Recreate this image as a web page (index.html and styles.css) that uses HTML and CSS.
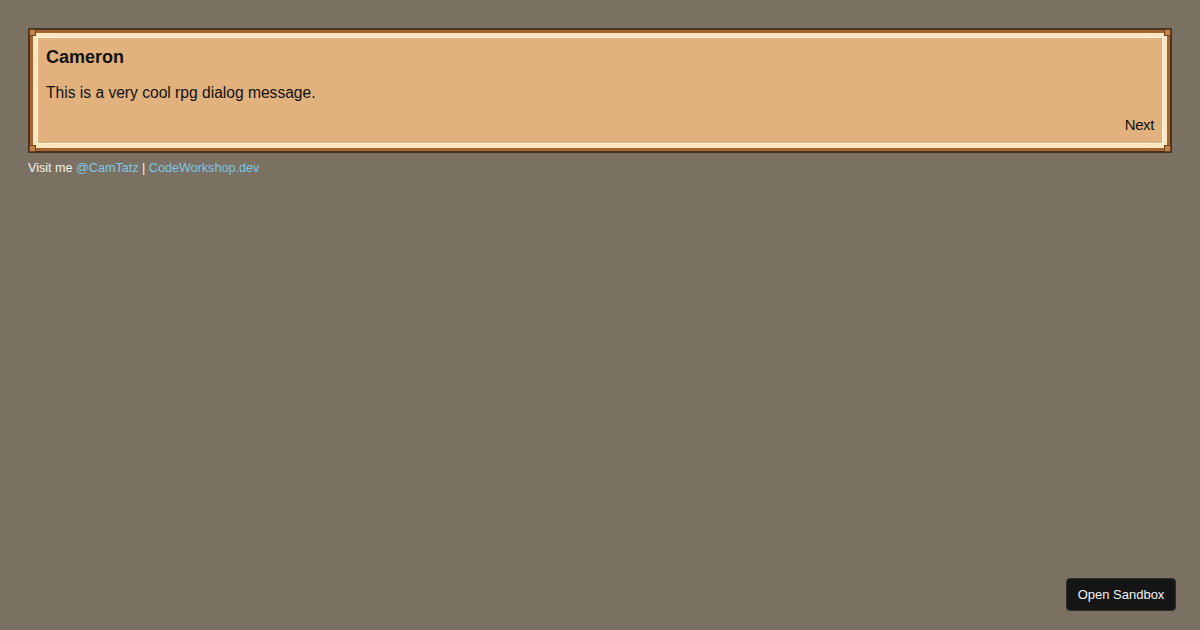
FILE: index.html
```html
<!DOCTYPE html>
<html lang="en">
<head>
<meta charset="utf-8">
<title>RPG Dialog</title>
<link rel="stylesheet" href="styles.css">
</head>
<body>
<main class="page">
  <section class="dialog">
    <span class="corner corner-tl"></span>
    <span class="corner corner-tr"></span>
    <span class="corner corner-bl"></span>
    <span class="corner corner-br"></span>
    <div class="dialog-inner">
      <div class="speaker">Cameron</div>
      <div class="message">This is a very cool rpg dialog message.</div>
      <div class="next">Next</div>
    </div>
  </section>
  <p class="footer">Visit me <a href="#">@CamTatz</a> | <a href="#">CodeWorkshop.dev</a></p>
</main>
<a class="sandbox-btn" href="#">Open Sandbox</a>
</body>
</html>
```
FILE: styles.css
```css
html, body {
  margin: 0;
  padding: 0;
}
body {
  background: #7a7163;
  font-family: "Liberation Sans", Arial, sans-serif;
  color: #111;
  min-height: 630px;
}
.page {
  padding: 28px 28px 0;
}
.dialog {
  position: relative;
  border: 2px solid #4a3220;
  background: #a5652f;
  padding: 3px;
}
.dialog-inner {
  border: 4px solid #ffe6c0;
  box-shadow: inset 0 0 0 1px #fff3dc;
  background: #e2b27e;
  padding: 10px 9px 10px;
  display: flex;
  flex-direction: column;
}
.speaker {
  font-size: 18px;
  line-height: 21px;
  font-weight: bold;
  color: #111;
}
.message {
  margin-top: 16px;
  font-size: 15.6px;
  line-height: 18px;
  color: #111;
}
.next {
  margin-top: 14px;
  font-size: 15px;
  line-height: 18px;
  letter-spacing: -0.4px;
  text-align: right;
  color: #111;
}
.corner {
  position: absolute;
  width: 5px;
  height: 5px;
  background: #c0844a;
  border: 1px solid #6e4220;
}
.corner-tl { top: -1px; left: -1px; }
.corner-tr { top: -1px; right: -1px; }
.corner-bl { bottom: -1px; left: -1px; }
.corner-br { bottom: -1px; right: -1px; }
.footer {
  margin: 8px 0 0;
  font-size: 12.6px;
  color: #f4f1ec;
}
.footer a {
  color: #7fc7e6;
  text-decoration: none;
}
.sandbox-btn {
  position: fixed;
  right: 24px;
  bottom: 19px;
  width: 110px;
  height: 33px;
  box-sizing: border-box;
  display: flex;
  align-items: center;
  justify-content: center;
  background: #151515;
  border: 1px solid #2e2e2e;
  border-radius: 4px;
  color: #f2f2f2;
  font-size: 13px;
  text-decoration: none;
}
```
